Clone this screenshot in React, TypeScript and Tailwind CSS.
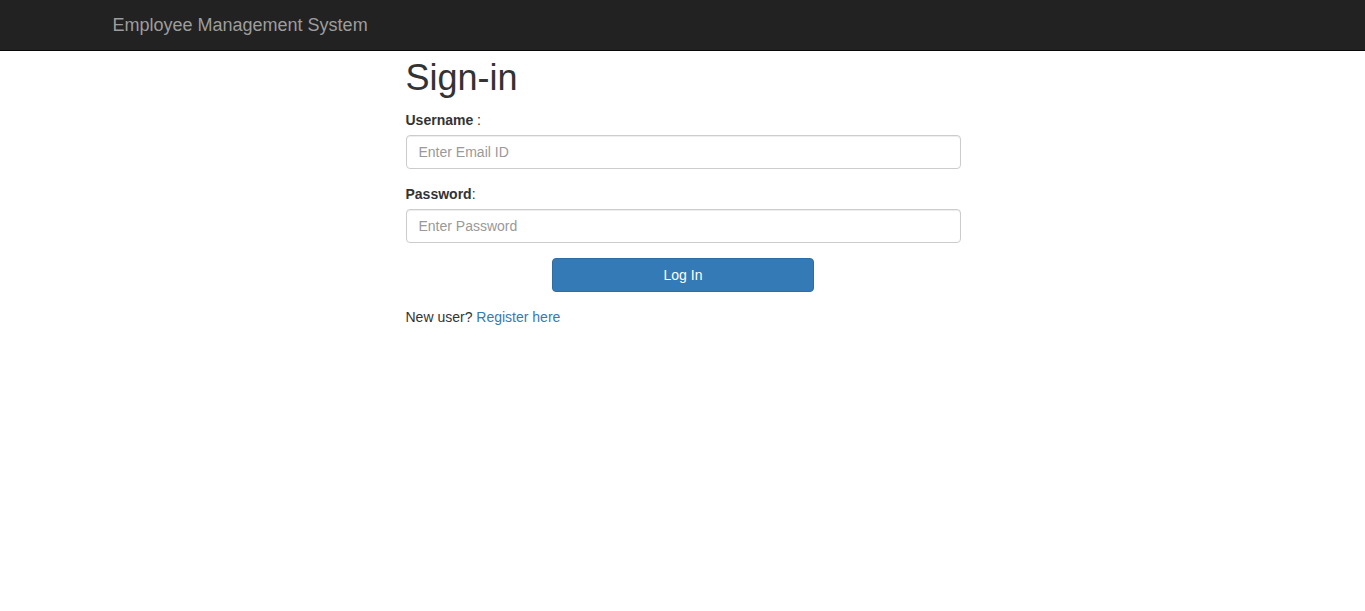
import React from "react";

export default function App() {
  return (
    <div className="min-h-[611px] bg-white text-[#333] text-[14px] leading-[20px] font-['Liberation_Sans',Arial,sans-serif]">
      <nav className="h-[51px] bg-[#222] border-b border-[#080808]">
        <div className="w-[1170px] mx-auto px-[15px]">
          <a href="#" className="block py-[15px] text-[18px] leading-[20px] text-[#9d9d9d] no-underline">
            Employee Management System
          </a>
        </div>
      </nav>
      <div className="flex justify-center">
        <div className="w-[555px] ml-[1px]">
          <h1 className="mt-[7px] mb-[12px] text-[36px] leading-[1.1] font-normal text-[#333]">Sign-in</h1>
          <form onSubmit={(e) => e.preventDefault()}>
            <div className="mb-[15px]">
              <label className="block mb-[5px]">
                <span className="font-bold">Username</span> :
              </label>
              <input
                type="text"
                placeholder="Enter Email ID"
                className="block w-full h-[34px] px-[12px] py-[6px] text-[14px] leading-[20px] text-[#555] bg-white border border-[#ccc] rounded-[4px] shadow-[inset_0_1px_1px_rgba(0,0,0,0.075)] placeholder:text-[#999] outline-none"
              />
            </div>
            <div className="mb-[15px]">
              <label className="block mb-[5px]">
                <span className="font-bold">Password</span>:
              </label>
              <input
                type="password"
                placeholder="Enter Password"
                className="block w-full h-[34px] px-[12px] py-[6px] text-[14px] leading-[20px] text-[#555] bg-white border border-[#ccc] rounded-[4px] shadow-[inset_0_1px_1px_rgba(0,0,0,0.075)] placeholder:text-[#999] outline-none"
              />
            </div>
            <div className="mb-[15px] flex justify-center">
              <button
                type="submit"
                className="w-[262px] h-[34px] bg-[#337ab7] border border-[#2e6da4] rounded-[4px] text-white text-[14px] leading-[20px]"
              >
                Log In
              </button>
            </div>
            <div>
              New user? <a href="#" className="text-[#337ab7] no-underline">Register here</a>
            </div>
          </form>
        </div>
      </div>
    </div>
  );
}
